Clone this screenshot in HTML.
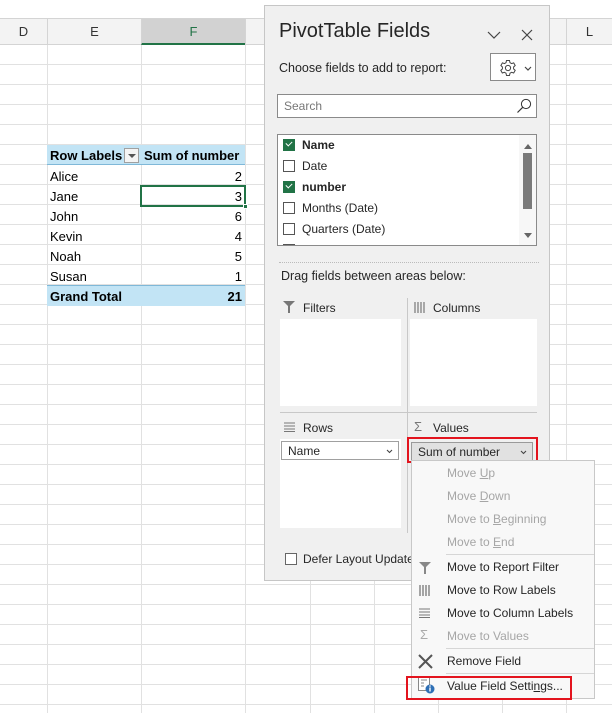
<!DOCTYPE html>
<html><head><meta charset="utf-8"><style>
*{margin:0;padding:0;box-sizing:border-box}
body{width:612px;height:713px;position:relative;overflow:hidden;background:#fff;font-family:"Liberation Sans",sans-serif;color:#222}
.a{position:absolute}
.grid{left:0;top:45px;width:612px;height:668px;
background-image:linear-gradient(#e1e1e1 1px,transparent 1px);background-size:100% 20px;background-position:0 19px}
.v{position:absolute;top:18px;width:1px;height:695px;background:#e1e1e1}
.hdr{top:18px;height:27px;background:#f3f3f3;border-top:1px solid #d4d4d4;border-bottom:1px solid #d4d4d4;font-size:13px;text-align:center;line-height:26px;color:#333}
.cell{font-size:13px;color:#000;height:20px;line-height:21px}
.p{font-family:"Liberation Sans",sans-serif;font-size:12px;color:#262626}
.cb{position:absolute;width:12px;height:12px;border:1px solid #555;background:#fff}
.cbk{position:absolute;width:12px;height:12px;background:#217346}
.cbk:after{content:"";position:absolute;left:3px;top:2px;width:5px;height:3px;border-left:1.5px solid #fff;border-bottom:1.5px solid #fff;transform:rotate(-45deg)}
.mi{position:absolute;left:35px;font-size:12px;color:#262626}
.dis{color:#a6a6a6}
</style></head><body>
<div class="a grid"></div>
<div class="v" style="left:47px"></div><div class="v" style="left:141px"></div><div class="v" style="left:245px"></div>
<div class="v" style="left:310px"></div><div class="v" style="left:374px"></div><div class="v" style="left:438px"></div><div class="v" style="left:502px"></div><div class="v" style="left:566px"></div>
<div class="a" style="left:0;top:0;width:612px;height:18px;background:#fff"></div>
<div class="a hdr" style="left:0;width:47px">D</div>
<div class="a hdr" style="left:47px;width:94px;border-left:1px solid #d4d4d4">E</div>
<div class="a hdr" style="left:141px;width:104px;background:#d2d2d2;border-left:1px solid #d4d4d4;border-bottom:2px solid #217346;color:#217346">F</div>
<div class="a hdr" style="left:245px;width:321px;border-left:1px solid #d4d4d4"></div>
<div class="a hdr" style="left:566px;width:46px;border-left:1px solid #d4d4d4">L</div>

<!-- pivot -->
<div class="a" style="left:47px;top:145px;width:198px;height:20px;background:#c2e4f5;border-bottom:1px solid #7fb8d8"></div>
<div class="a cell" style="left:50px;top:145px;font-weight:bold">Row Labels</div>
<div class="a" style="left:124px;top:148px;width:15px;height:15px;border:1px solid #a0a0a0;background:#f4f4f4"><div style="margin:5px auto 0;width:0;height:0;border-left:4px solid transparent;border-right:4px solid transparent;border-top:4px solid #555"></div></div>
<div class="a cell" style="left:144px;top:145px;font-weight:bold">Sum of number</div>
<div class="a cell" style="left:50px;top:166px">Alice</div><div class="a cell" style="left:141px;width:101px;text-align:right;top:166px">2</div>
<div class="a cell" style="left:50px;top:186px">Jane</div><div class="a cell" style="left:141px;width:101px;text-align:right;top:186px">3</div>
<div class="a cell" style="left:50px;top:206px">John</div><div class="a cell" style="left:141px;width:101px;text-align:right;top:206px">6</div>
<div class="a cell" style="left:50px;top:226px">Kevin</div><div class="a cell" style="left:141px;width:101px;text-align:right;top:226px">4</div>
<div class="a cell" style="left:50px;top:246px">Noah</div><div class="a cell" style="left:141px;width:101px;text-align:right;top:246px">5</div>
<div class="a cell" style="left:50px;top:266px">Susan</div><div class="a cell" style="left:141px;width:101px;text-align:right;top:266px">1</div>
<div class="a" style="left:47px;top:285px;width:198px;height:21px;background:#c2e4f5;border-top:1px solid #7fb8d8"></div>
<div class="a cell" style="left:50px;top:286px;font-weight:bold">Grand Total</div><div class="a cell" style="left:141px;width:101px;text-align:right;top:286px;font-weight:bold">21</div>
<div class="a" style="left:140px;top:185px;width:106px;height:22px;border:2px solid #217346"></div>
<div class="a" style="left:243px;top:204px;width:5px;height:5px;background:#217346;border:1px solid #fff"></div>

<!-- panel -->
<div class="a p" style="left:264px;top:5px;width:286px;height:576px;background:#f0f0f0;border:1px solid #c6c6c6">
 <div class="a" style="left:14px;top:14px;font-size:20px;color:#262626">PivotTable Fields</div>
 <svg class="a" style="left:222px;top:24px" width="14" height="10"><path d="M1 2l6 6 6-6" fill="none" stroke="#444" stroke-width="1.2"/></svg>
 <svg class="a" style="left:256px;top:23px" width="12" height="12"><path d="M1 1l10 10M11 1L1 11" stroke="#444" stroke-width="1.2"/></svg>
 <div class="a" style="left:14px;top:55px;font-size:12.5px">Choose fields to add to report:</div>
 <div class="a" style="left:225px;top:47px;width:46px;height:28px;border:1px solid #8a8a8a;background:#fff">
  <svg class="a" style="left:8px;top:5px" width="18" height="18" viewBox="0 0 18 18"><path d="M7.5 1.5h3l.5 2.2 1.6.9 2.1-.7 1.5 2.6-1.6 1.5v1.9l1.6 1.5-1.5 2.6-2.1-.7-1.6.9-.5 2.3h-3l-.5-2.3-1.6-.9-2.1.7-1.5-2.6 1.6-1.5V8L1.9 6.5l1.5-2.6 2.1.7L7 3.7z" fill="none" stroke="#444" stroke-width="1"/><circle cx="9" cy="9" r="2.6" fill="none" stroke="#444"/></svg>
  <svg class="a" style="left:33px;top:12px" width="8" height="6"><path d="M1 1l3 3 3-3" fill="none" stroke="#444" stroke-width="1.2"/></svg>
 </div>
 <div class="a" style="left:12px;top:88px;width:260px;height:24px;border:1px solid #8a8a8a;background:#fff">
  <div class="a" style="left:6px;top:4px;color:#777">Search</div>
  <svg class="a" style="left:238px;top:3px" width="16" height="16"><circle cx="10" cy="6" r="4.6" fill="none" stroke="#333"/><path d="M6.7 9.3L1.5 14.5" stroke="#333" stroke-width="1.2"/></svg>
 </div>
 <div class="a" style="left:12px;top:128px;width:260px;height:112px;border:1px solid #8a8a8a;background:#fff;overflow:hidden">
  <div class="cbk" style="left:5px;top:4px"></div><div class="a" style="left:24px;top:3px;font-weight:bold">Name</div>
  <div class="cb" style="left:5px;top:25px"></div><div class="a" style="left:24px;top:24px">Date</div>
  <div class="cbk" style="left:5px;top:46px"></div><div class="a" style="left:24px;top:45px;font-weight:bold">number</div>
  <div class="cb" style="left:5px;top:67px"></div><div class="a" style="left:24px;top:66px">Months (Date)</div>
  <div class="cb" style="left:5px;top:88px"></div><div class="a" style="left:24px;top:87px">Quarters (Date)</div>
  <div class="cb" style="left:5px;top:109px"></div><div class="a" style="left:24px;top:108px">Years (Date)</div>
  <div class="a" style="left:241px;top:0;width:18px;height:110px;background:#f7f7f7"></div>
  <div class="a" style="left:246px;top:9px;width:0;height:0;border-left:4px solid transparent;border-right:4px solid transparent;border-bottom:5px solid #666"></div>
  <div class="a" style="left:245px;top:18px;width:9px;height:56px;background:#7a7a7a"></div>
  <div class="a" style="left:246px;top:98px;width:0;height:0;border-left:4px solid transparent;border-right:4px solid transparent;border-top:5px solid #666"></div>
 </div>
 <div class="a" style="left:14px;top:256px;width:260px;border-top:1px dotted #bbb"></div>
 <div class="a" style="left:16px;top:263px;font-size:12.5px">Drag fields between areas below:</div>
 <svg class="a" style="left:18px;top:295px" width="12" height="12"><path d="M0 0h12L7 5v7H5V5z" fill="#777"/></svg>
 <div class="a" style="left:38px;top:295px">Filters</div>
 <svg class="a" style="left:149px;top:296px" width="12" height="11"><path d="M1 0v11M4 0v11M7 0v11M10 0v11" stroke="#777" stroke-width="1.2"/></svg>
 <div class="a" style="left:168px;top:295px">Columns</div>
 <div class="a" style="left:15px;top:313px;width:121px;height:87px;background:#fff"></div>
 <div class="a" style="left:145px;top:313px;width:127px;height:87px;background:#fff"></div>
 <div class="a" style="left:142px;top:292px;width:1px;height:235px;background:#c8c8c8"></div>
 <div class="a" style="left:15px;top:406px;width:257px;height:1px;background:#c8c8c8"></div>
 <svg class="a" style="left:19px;top:416px" width="11" height="10"><path d="M0 1h11M0 4h11M0 7h11M0 9.5h11" stroke="#777" stroke-width="1"/></svg>
 <div class="a" style="left:38px;top:415px">Rows</div>
 <div class="a" style="left:149px;top:413px;font-size:13px;color:#777">Σ</div>
 <div class="a" style="left:168px;top:415px">Values</div>
 <div class="a" style="left:15px;top:433px;width:121px;height:89px;background:#fff"></div>
 <div class="a" style="left:16px;top:435px;width:118px;height:19px;border:1px solid #a0a0a0;background:#fff"><div class="a" style="left:6px;top:2px">Name</div>
  <svg class="a" style="left:104px;top:7px" width="7" height="5"><path d="M1 1l2.5 2.5L6 1" fill="none" stroke="#444" stroke-width="1.1"/></svg></div>
 <div class="cb" style="left:20px;top:547px;border-color:#666"></div>
 <div class="a" style="left:38px;top:546px;font-size:12px">Defer Layout Update</div>
</div>

<!-- values button -->
<div class="a p" style="left:411px;top:442px;width:122px;height:19px;background:#e1e1e1;border:1px solid #9a9a9a"><div class="a" style="left:6px;top:2px">Sum of number</div>
 <svg class="a" style="left:108px;top:7px" width="7" height="5"><path d="M1 1l2.5 2.5L6 1" fill="none" stroke="#444" stroke-width="1.1"/></svg></div>
<div class="a" style="left:407px;top:437px;width:131px;height:26px;border:2px solid #e3141e"></div>

<!-- menu -->
<div class="a p" style="left:411px;top:460px;width:184px;height:239px;background:#f8f8f8;border:1px solid #c8c8c8">
 <div class="mi dis" style="top:5px">Move <u>U</u>p</div>
 <div class="mi dis" style="top:28px">Move <u>D</u>own</div>
 <div class="mi dis" style="top:51px">Move to <u>B</u>eginning</div>
 <div class="mi dis" style="top:74px">Move to <u>E</u>nd</div>
 <div class="a" style="left:34px;top:93px;width:148px;height:1px;background:#d6d6d6"></div>
 <svg class="a" style="left:7px;top:101px" width="12" height="12"><path d="M0 0h12L7 5v7H5V5z" fill="#888"/></svg>
 <div class="mi" style="top:99px">Move to Report Filter</div>
 <svg class="a" style="left:7px;top:124px" width="11" height="11"><path d="M1 0v11M4 0v11M7 0v11M10 0v11" stroke="#777" stroke-width="1.3"/></svg>
 <div class="mi" style="top:122px">Move to Row Labels</div>
 <svg class="a" style="left:7px;top:147px" width="11" height="10"><path d="M0 1h11M0 4h11M0 7h11M0 9.5h11" stroke="#777" stroke-width="1"/></svg>
 <div class="mi" style="top:145px">Move to Column Labels</div>
 <div class="a" style="left:8px;top:166px;font-size:13px;color:#aaa">Σ</div>
 <div class="mi dis" style="top:168px">Move to Values</div>
 <div class="a" style="left:34px;top:187px;width:148px;height:1px;background:#d6d6d6"></div>
 <svg class="a" style="left:6px;top:193px" width="15" height="15"><path d="M1 1l13 13M14 1L1 14" stroke="#555" stroke-width="2"/></svg>
 <div class="mi" style="top:193px">Remove Field</div>
 <div class="a" style="left:34px;top:212px;width:148px;height:1px;background:#d6d6d6"></div>
 <svg class="a" style="left:6px;top:216px" width="17" height="17"><rect x="0.5" y="0.5" width="11" height="13" fill="#fff" stroke="#888"/><path d="M3 3h6M3 6h3M3 9h3" stroke="#888"/><circle cx="12" cy="12" r="4.5" fill="#2e6fb5"/><path d="M12 10.5v4" stroke="#fff" stroke-width="1.4"/><circle cx="12" cy="9" r=".8" fill="#fff"/></svg>
 <div class="mi" style="top:218px">Value Field Setti<u>n</u>gs...</div>
</div>
<div class="a" style="left:406px;top:676px;width:166px;height:24px;border:2px solid #e3141e"></div>
</body></html>
